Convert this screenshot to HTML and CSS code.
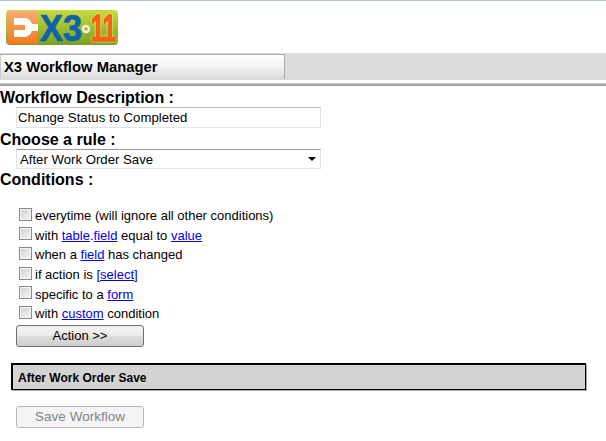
FILE: index.html
```html
<!DOCTYPE html>
<html>
<head>
    <title>X3 Workflow Manager</title>
    <link rel="stylesheet" href="styles.css">
</head>
<body>
    <div class="logo-row">
        <svg class="logo" width="112" height="35" viewBox="0 0 112 35">
            <defs>
                <linearGradient id="logoGreen" x1="0" y1="0" x2="0" y2="1">
                    <stop offset="0" stop-color="#c8da3c"/>
                    <stop offset="1" stop-color="#76a028"/>
                </linearGradient>
                <linearGradient id="logoOrange" x1="0" y1="0" x2="0" y2="1">
                    <stop offset="0" stop-color="#f8ab74"/>
                    <stop offset="1" stop-color="#f47a1c"/>
                </linearGradient>
            </defs>
            <rect width="112" height="35" rx="4" fill="url(#logoGreen)"/>
            <rect x="1" y="1" width="31" height="33" fill="url(#logoOrange)"/>
            <path d="M8 8h12a10 10 0 0 1 6 6h6v7h-6a10 10 0 0 1-6 6H8v-7h11v-5H8z" fill="#fff"/>
            <text x="34" y="31" class="logo-x3" textLength="42" lengthAdjust="spacingAndGlyphs">X3</text>
            <circle cx="80" cy="19" r="3" fill="none" stroke="#f2f4d8" stroke-width="2.4"/>
            <text x="85" y="31" class="logo-11" textLength="25" lengthAdjust="spacingAndGlyphs">11</text>
        </svg>
    </div>
    <div class="tab-bar">
        <div class="tab-title">X3 Workflow Manager</div>
    </div>
    <div class="tab-rule"></div>

    <form class="workflow-form">
        <div class="field-label">Workflow Description :</div>
        <input type="text" class="text-input" value="Change Status to Completed">
        <div class="field-label rule-label">Choose a rule :</div>
        <div class="rule-select">
            <span>After Work Order Save</span>
            <span class="select-arrow"></span>
        </div>
        <div class="field-label">Conditions :</div>

        <ul class="condition-list">
            <li><span class="check"></span>everytime (will ignore all other conditions)</li>
            <li><span class="check"></span>with <a href="#">table</a>.<a href="#">field</a> equal to <a href="#">value</a></li>
            <li><span class="check"></span>when a <a href="#">field</a> has changed</li>
            <li><span class="check"></span>if action is <a href="#">[select]</a></li>
            <li><span class="check"></span>specific to a <a href="#">form</a></li>
            <li><span class="check"></span>with <a href="#">custom</a> condition</li>
        </ul>
        <div class="action-row">
            <button type="button" class="form-button">Action &gt;&gt;</button>
        </div>

        <div class="rule-panel">After Work Order Save</div>

        <div class="save-row">
            <button type="button" class="form-button disabled-button" disabled>Save Workflow</button>
        </div>
    </form>
</body>
</html>
```

FILE: styles.css
```css
body {
    font-family: "Liberation Sans", Arial, sans-serif;
    font-size: 12px;
    color: #000;
    background-color: #fff;
    margin: 0;
    padding: 0;
    border-top: 1px solid #b0c4de;
}

.logo-row {
    height: 52px;
    padding: 9px 0 0 6px;
    box-sizing: border-box;
}

.logo {
    display: block;
    overflow: visible;
}

.logo-x3 {
    font-family: "Liberation Sans", Arial, sans-serif;
    font-size: 36px;
    font-weight: bold;
    fill: #0f63a8;
    stroke: #0f63a8;
    stroke-width: 0.7px;
}

.logo-11 {
    font-family: "Liberation Sans", Arial, sans-serif;
    font-size: 36px;
    font-weight: bold;
    fill: #f4630f;
    stroke: #f4630f;
    stroke-width: 1.4px;
    filter: drop-shadow(0 0 1px #fff3b0);
}

.tab-bar {
    height: 27px;
    background-color: #dcdcdc;
    padding-top: 1px;
    box-sizing: border-box;
}

.tab-title {
    width: 285px;
    height: 25px;
    box-sizing: border-box;
    border: 1px solid #a8a8a8;
    border-bottom: none;
    border-left-color: #ccc;
    background: linear-gradient(to bottom, #fff 0%, #f4f4f4 50%, #d8d8d8 100%);
    font-size: 14.8px;
    font-weight: bold;
    line-height: 24px;
    padding-left: 3px;
}

.tab-rule {
    height: 3px;
    margin-top: 3px;
    background: linear-gradient(to bottom, #d0d0d0, #8c8c8c);
}

.field-label {
    height: 20px;
    font-size: 16px;
    font-weight: bold;
    line-height: 22px;
}

.rule-label {
    margin-top: 1px;
}

.workflow-form {
    padding-top: 1px;
}

.text-input {
    display: block;
    width: 305px;
    height: 21px;
    box-sizing: border-box;
    margin-left: 16px;
    padding: 0 1px;
    border: 1px solid #dde3ec;
    border-top-color: #bbb;
    font-family: "Liberation Sans", Arial, sans-serif;
    font-size: 13.2px;
    color: #000;
}

.rule-select {
    display: flex;
    justify-content: space-between;
    align-items: center;
    width: 305px;
    height: 20px;
    box-sizing: border-box;
    margin-left: 16px;
    padding: 0 4px 0 3px;
    border: 1px solid #dde3ec;
    border-top-color: #999;
    font-size: 13.2px;
}

.select-arrow {
    width: 0;
    height: 0;
    border-left: 4px solid transparent;
    border-right: 4px solid transparent;
    border-top: 4px solid #000;
}

.condition-list {
    list-style: none;
    margin: 17px 0 0;
    padding: 0 0 0 19px;
}

.condition-list li {
    display: flex;
    align-items: center;
    height: 19.6px;
    font-size: 13px;
    white-space: pre;
}

.condition-list a {
    color: #0000ee;
}

.check {
    width: 13px;
    height: 13px;
    box-sizing: border-box;
    margin: -3px 3px 0 0;
    border: 1px solid #8a8a8a;
    box-shadow: inset 0 0 0 1px #f4f4f4;
    background: linear-gradient(to bottom right, #cfcfcf, #f6f6f6);
}

.action-row {
    padding: 1px 0 0 16px;
}

.form-button {
    display: block;
    width: 128px;
    height: 22px;
    box-sizing: border-box;
    padding: 0;
    border: 1px solid #707070;
    border-radius: 3px;
    background: linear-gradient(to bottom, #f2f2f2 0%, #ebebeb 50%, #dddddd 50%, #cfcfcf 100%);
    font-family: "Liberation Sans", Arial, sans-serif;
    font-size: 13px;
    color: #000;
}

.disabled-button {
    border-color: #b5b5b5;
    background: #f4f4f4;
    color: #838383;
    font-size: 13.5px;
}

.rule-panel {
    width: 575px;
    height: 27px;
    box-sizing: border-box;
    margin: 16px 0 0 11px;
    padding-left: 5px;
    border: 1px solid #000;
    border-top-width: 2px;
    border-left-width: 2px;
    box-shadow: 1px 1px 0 #a8a8a8;
    background-color: #d3d3d3;
    font-size: 12px;
    font-weight: bold;
    line-height: 26px;
}

.save-row {
    padding: 16px 0 0 16px;
}
```
